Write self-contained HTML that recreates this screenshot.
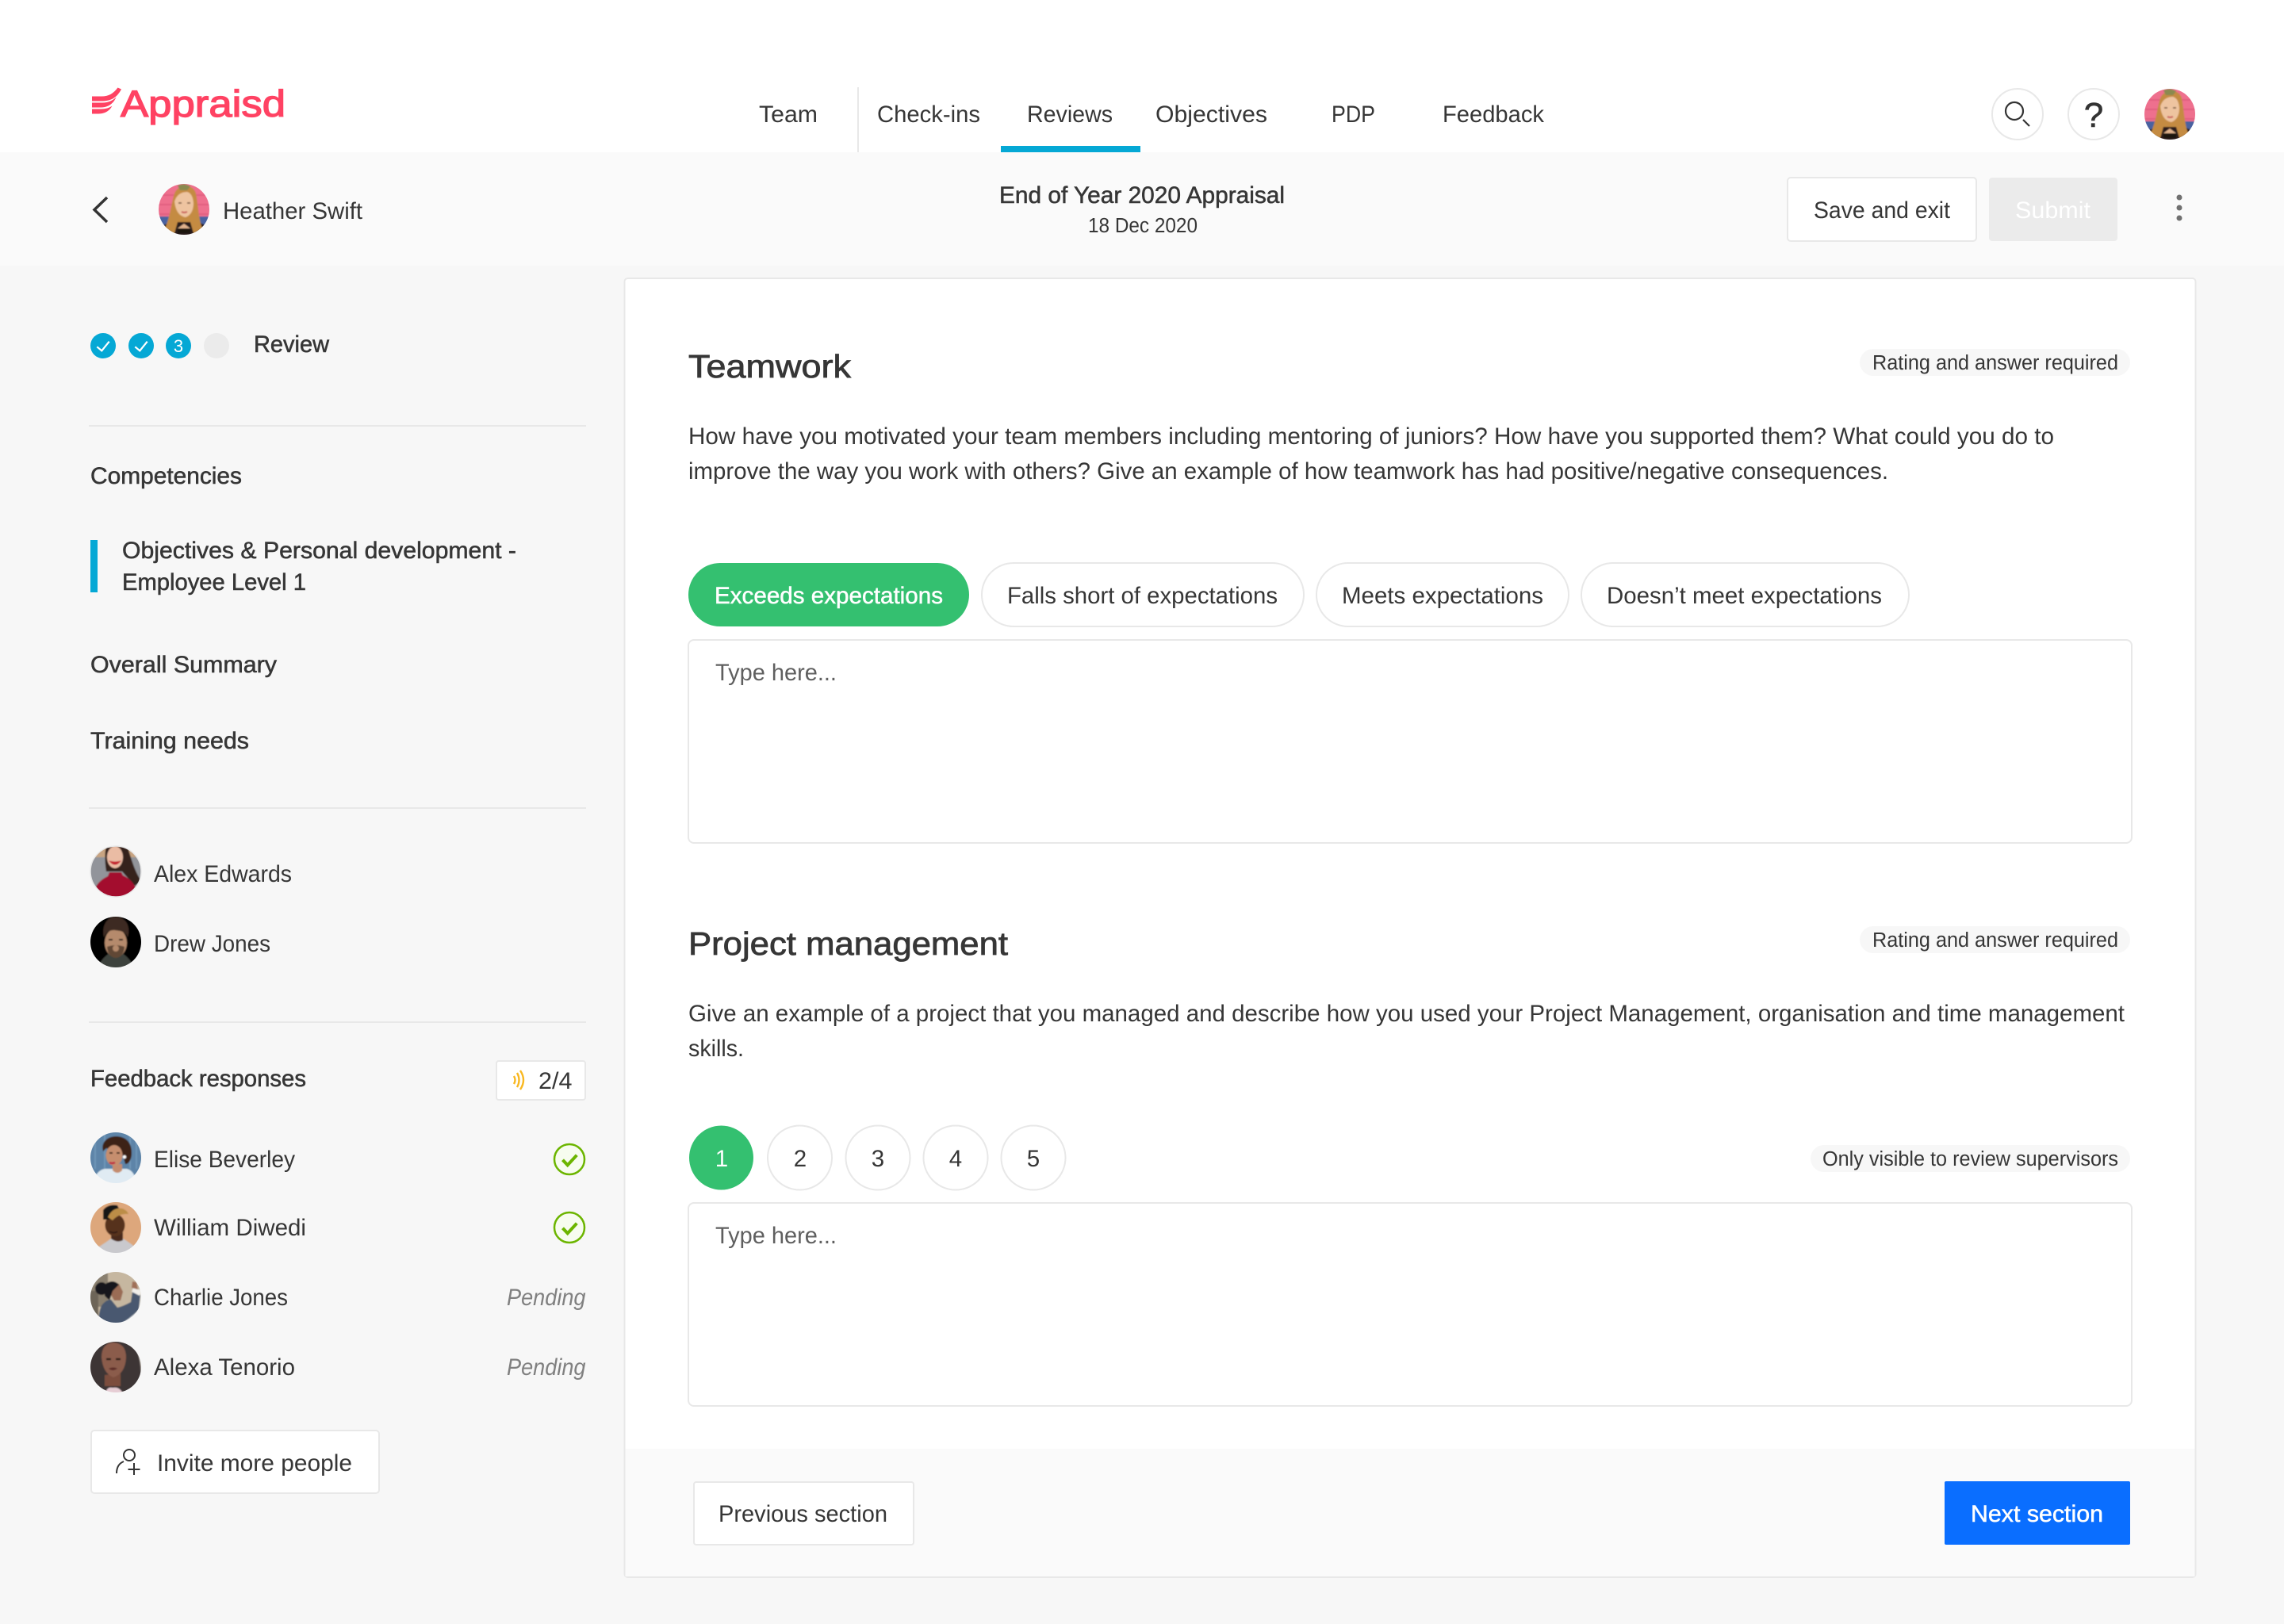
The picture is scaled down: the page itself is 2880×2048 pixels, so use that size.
<!DOCTYPE html>
<html lang="en"><head><meta charset="utf-8"><title>End of Year 2020 Appraisal</title>
<style>
html,body{margin:0;padding:0;width:2880px;height:2048px;overflow:hidden;background:#f7f7f7}
svg{display:block}
text{font-family:"Liberation Sans",Arial,sans-serif;font-size:29.5px;fill:#363636;white-space:pre}
.m{stroke:#363636;stroke-width:.55px}
.w{fill:#fff}.wm{fill:#fff;stroke:#fff;stroke-width:.5px}
.s{font-size:25.5px}
.h{font-size:41px;stroke:#363636;stroke-width:.8px}
.g{fill:#5f5f5f}
.p{fill:#808080;font-style:italic}
.box{fill:#fff;stroke:#e8e8e8;stroke-width:2}
.line{stroke:#e8e8e8;stroke-width:2}
.pill{fill:#f7f7f7}
</style></head><body>
<svg xmlns="http://www.w3.org/2000/svg" width="2880" height="2048" viewBox="0 0 2880 2048">
<defs>
<clipPath id="c"><circle r="32"/></clipPath>
<filter id="b" x="-20%" y="-20%" width="140%" height="140%"><feGaussianBlur stdDeviation=".7"/></filter>
<g id="heather" clip-path="url(#c)"><g filter="url(#b)">
<rect x="-36" y="-36" width="72" height="72" fill="#ee6f8e"/>
<path d="M-36-18H36M-36-6H36M-36 6H36" stroke="#dc5a7c" stroke-width="1.500"/>
<rect x="-36" y="9" width="72" height="27" fill="#4a62a0"/>
<path d="M-36 36V22Q-20 20-14 12H14Q22 20 36 22V36z" fill="#2a1f1a"/>
<path d="M-24 24C-17 8-16-8-12-20-8-32 12-33 15-20 18-6 18 10 23 24L12 30 8 16H-8L-12 30z" fill="#c48b42"/>
<path d="M-8-30Q0-34 8-29L4-24H-5z" fill="#8a8a50"/>
<path d="M-12-10Q-8-22 4-22 11-20 12-8 12 6 2 10-10 8-12-10z" fill="#eec4a0"/>
<path d="M-7-8h4M4-8h4" stroke="#6a4a36" stroke-width="1.600"/><path d="M-3 3q3 2 7 0" stroke="#c85a58" stroke-width="2" fill="none"/>
<path d="M-8 30V24H8V30z" fill="#1a1410"/><path d="M-8 24L0 18 8 24z" fill="#e2b48e"/>
</g></g>
<g id="alex"><g clip-path="url(#c)"><g filter="url(#b)">
<rect x="-36" y="-36" width="72" height="72" fill="#92949a"/><rect x="-36" y="-36" width="72" height="18" fill="#c8a482"/>
<path d="M-12-33H14C20-16 22-4 32 12L24 18 8 0H-12C-14-12-14-24-12-33z" fill="#34211c"/>
<ellipse cx="-1" cy="-18" rx="10" ry="14" fill="#eabca4"/>
<path d="M-6-12q5 5 10 0q-5 1-10 0z" fill="#c41a2c" stroke="#c41a2c" stroke-width="2"/>
<path d="M-30 36Q-28 14-10 6L-8 1H7L9 5Q26 12 30 36z" fill="#a3102e"/>
</g></g><circle r="32" fill="none" stroke="#e8e8e8" stroke-width="1.500"/></g>
<g id="drew" clip-path="url(#c)"><g filter="url(#b)">
<rect x="-36" y="-36" width="72" height="72" fill="#050505"/>
<path d="M-24 36Q-20 22-8 14H8Q20 22 24 36z" fill="#3d423c"/>
<ellipse cx="0" cy="1" rx="14" ry="18" fill="#b58a6c"/>
<path d="M-15-6C-19-28-4-34 4-31 16-28 18-16 15-6 12-14 6-14-2-15-9-15-12-12-15-6z" fill="#3e2c20"/>
<path d="M-11 6Q0 2 11 6 10 19 0 20-10 19-11 6z" fill="#604636"/>
<ellipse cx="0" cy="8" rx="4" ry="4" fill="#b58a6c"/>
<path d="M-9-3h5M4-3h5" stroke="#241710" stroke-width="2"/>
</g></g>
<g id="elise" clip-path="url(#c)"><g filter="url(#b)">
<rect x="-36" y="-36" width="72" height="72" fill="#5d84a8"/>
<path d="M-26-36V14M-14-36V14M18-36V14M26-36V14" stroke="#7096b8" stroke-width="2"/>
<path d="M-30 36Q-26 16-14 14H14Q24 16 28 36z" fill="#e0ebf3"/>
<path d="M-4 8H8V16Q2 22-4 16z" fill="#c48c6e"/>
<path d="M-16-8C-22-30 14-34 19-14 22-2 18 8 12 8L8-6-12-12z" fill="#3d2115"/>
<ellipse cx="-2" cy="-3" rx="10.500" ry="13" fill="#c68e6e"/>
<path d="M-8 6q3 2 7 0" stroke="#c02040" stroke-width="2.500" fill="none"/>
<path d="M-8-6h4M1-6h4" stroke="#2a160e" stroke-width="1.800"/><circle cx="11" cy="-1" r="2.200" fill="#fff"/>
</g></g>
<g id="william" clip-path="url(#c)"><g filter="url(#b)">
<rect x="-36" y="-36" width="72" height="72" fill="#dda77c"/>
<path d="M-24 26Q-14 20-6 14H9Q16 18 26 26V36H-24z" fill="#c9c9cd"/>
<path d="M-6 6H9V16Q2 20-6 14z" fill="#4a2a1b"/>
<ellipse cx="-1" cy="-3" rx="12.500" ry="14" fill="#57321f"/>
<path d="M-16-10V-22Q-10-30 2-28L6-20-8-10z" fill="#191516"/>
<path d="M-10-13Q-4-26 8-24 14-22 16-17 4-18-4-9z" fill="#bc8d46"/>
<path d="M-8 5q6 3 10 0" stroke="#2a140c" stroke-width="1.500" fill="none"/>
</g></g>
<g id="charlie" clip-path="url(#c)"><g filter="url(#b)">
<rect x="-36" y="-36" width="72" height="72" fill="#c6b7a0"/>
<path d="M-36-36H-10V12H-36z" fill="#8a8070"/><path d="M-36-8H-22V24H-36z" fill="#6d6558"/>
<rect x="24" y="-10" width="12" height="30" fill="#e8e4dc"/><rect x="4" y="20" width="30" height="16" fill="#dfe3e6"/>
<path d="M-10-10Q-6-18 4-17L9-7 6 4H-2z" fill="#9a6c54"/>
<circle cx="-18" cy="-11" r="8" fill="#14141a"/><path d="M-14-16Q-4-24 4-16L-4-8-8 4-14-2z" fill="#14141a"/>
<path d="M-22 36Q-22 14-16 8-10 2-6 3L2 13Q10 11 19 6L21-7 31-3 29 16Q14 30 2 36z" fill="#48586f"/>
<path d="M20-7L22-12 31-8 30-2z" fill="#f0eeea"/><path d="M20-12L21-20 26-19 28-10z" fill="#a07058"/>
</g></g>
<g id="alexa" clip-path="url(#c)"><g filter="url(#b)">
<rect x="-36" y="-36" width="72" height="72" fill="#3c3434"/>
<path d="M28-30H36V12H32Q32-14 22-30z" fill="#cfc7bf"/>
<path d="M-14 10V24H6V8z" fill="#7c4e3e"/>
<path d="M-18-12Q-18-30-3-31 13-30 13-12 12 8-3 13-16 8-18-12z" fill="#8b5c4b"/>
<path d="M-12-10h6M0-10h6" stroke="#1f1310" stroke-width="2.200"/>
<path d="M-8 2q5-2 9 0q-5 3-9 0z" fill="#5c2c28" stroke="#5c2c28"/>
<path d="M-14 36Q-12 24-4 26 6 24 10 36z" fill="#e6cdd4"/>
</g></g>
</defs>

<rect width="2880" height="2048" fill="#f7f7f7"/>
<rect width="2880" height="192" fill="#fff"/>
<rect y="192" width="2880" height="143" fill="#fafafa"/>

<!-- logo -->
<g fill="#ff4263">
<path d="M116 121.500H128C137 121.500 143 118 148.500 110.500L153 112.500C147 124 139 127.500 128 127.500H116Z"/>
<path d="M116 129.500H129C136 129.500 142 127 146.500 122.500C143 131 136 135.500 127 135.500H116Z"/>
<path d="M116 137.500H127C133 137.500 138 136 141.500 133.500C138 140 132 143.500 124 143.500H116Z"/>
</g>
<text x="152" y="147" textLength="208" lengthAdjust="spacingAndGlyphs" style="font-size:47px;fill:#ff4263;stroke:#ff4263;stroke-width:1.300px">Appraisd</text>

<!-- nav -->
<text x="957" y="154" textLength="74" lengthAdjust="spacingAndGlyphs">Team</text>
<line x1="1082" y1="110" x2="1082" y2="192" class="line"/>
<text x="1106" y="154" textLength="130" lengthAdjust="spacingAndGlyphs">Check-ins</text>
<text x="1295" y="154" textLength="108" lengthAdjust="spacingAndGlyphs">Reviews</text>
<text x="1457" y="154" textLength="141" lengthAdjust="spacingAndGlyphs">Objectives</text>
<text x="1679" y="154" textLength="55" lengthAdjust="spacingAndGlyphs">PDP</text>
<text x="1819" y="154" textLength="128" lengthAdjust="spacingAndGlyphs">Feedback</text>
<rect x="1262" y="184" width="176" height="8" fill="#05a8d5"/>

<circle cx="2544" cy="144" r="32" fill="#fff" stroke="#e8e8e8" stroke-width="2"/>
<circle cx="2540" cy="140" r="11" fill="none" stroke="#333" stroke-width="2.200"/>
<line x1="2551" y1="151" x2="2559" y2="159" stroke="#333" stroke-width="2.200"/>
<circle cx="2640" cy="144" r="32" fill="#fff" stroke="#e8e8e8" stroke-width="2"/>
<text x="2640" y="160" text-anchor="middle" style="font-size:44px;fill:#333;stroke:#333;stroke-width:.6px">?</text>
<use href="#heather" x="2736" y="144"/>

<!-- sub header -->
<path d="M135 249L119 264.500L135 280" fill="none" stroke="#333" stroke-width="3.500"/>
<use href="#heather" x="232" y="264"/>
<text x="281" y="276" textLength="176" lengthAdjust="spacingAndGlyphs">Heather Swift</text>
<text x="1260" y="256" textLength="360" lengthAdjust="spacingAndGlyphs" class="m">End of Year 2020 Appraisal</text>
<text x="1372" y="293" textLength="138" lengthAdjust="spacingAndGlyphs" class="s">18 Dec 2020</text>
<rect x="2254" y="224" width="238" height="80" rx="4" class="box"/>
<text x="2287" y="275" textLength="172" lengthAdjust="spacingAndGlyphs">Save and exit</text>
<rect x="2508" y="224" width="162" height="80" rx="4" fill="#ebebeb"/>
<text x="2541" y="275" textLength="95" lengthAdjust="spacingAndGlyphs" class="w">Submit</text>
<g fill="#707070"><circle cx="2748" cy="249" r="3.500"/><circle cx="2748" cy="262" r="3.500"/><circle cx="2748" cy="275" r="3.500"/></g>

<!-- sidebar -->
<g fill="#05a8d5"><circle cx="130" cy="436" r="16"/><circle cx="178" cy="436" r="16"/><circle cx="225" cy="436" r="16"/></g>
<circle cx="273" cy="436" r="16" fill="#ebebeb"/>
<path d="M122.300 437.300L128.300 442.300L137.700 430.700M170.300 437.300L176.300 442.300L185.700 430.700" fill="none" stroke="#fff" stroke-width="2.200"/>
<text x="225" y="444" text-anchor="middle" class="w" style="font-size:22px">3</text>
<text x="320" y="444" textLength="95" lengthAdjust="spacingAndGlyphs" class="m">Review</text>
<line x1="112" y1="537" x2="739" y2="537" class="line"/>
<text x="114" y="610" textLength="191" lengthAdjust="spacingAndGlyphs" class="m">Competencies</text>
<rect x="114" y="681" width="9" height="66" fill="#05a8d5"/>
<text x="154" y="704" textLength="497" lengthAdjust="spacingAndGlyphs" class="m">Objectives &amp; Personal development -</text>
<text x="154" y="744" textLength="232" lengthAdjust="spacingAndGlyphs" class="m">Employee Level 1</text>
<text x="114" y="848" textLength="235" lengthAdjust="spacingAndGlyphs" class="m">Overall Summary</text>
<text x="114" y="944" textLength="200" lengthAdjust="spacingAndGlyphs" class="m">Training needs</text>
<line x1="112" y1="1019" x2="739" y2="1019" class="line"/>

<use href="#alex" x="146" y="1099"/>
<text x="194" y="1112" textLength="174" lengthAdjust="spacingAndGlyphs">Alex Edwards</text>
<use href="#drew" x="146" y="1188"/>
<text x="194" y="1200" textLength="147" lengthAdjust="spacingAndGlyphs">Drew Jones</text>
<line x1="112" y1="1289" x2="739" y2="1289" class="line"/>

<text x="114" y="1370" textLength="272" lengthAdjust="spacingAndGlyphs" class="m">Feedback responses</text>
<rect x="626" y="1338" width="112" height="49" rx="3" class="box"/>
<path d="M648 1357q3 5 0 10M652 1353q5 9 0 18M656 1350q8 12 0 24" fill="none" stroke="#f9b820" stroke-width="2.400"/>
<text x="679" y="1373" textLength="42.500" lengthAdjust="spacingAndGlyphs">2/4</text>

<use href="#elise" x="146" y="1460"/>
<text x="194" y="1472" textLength="178" lengthAdjust="spacingAndGlyphs">Elise Beverley</text>
<circle cx="718" cy="1462" r="19" fill="#f7fcef" stroke="#6cb500" stroke-width="2.500"/>
<path d="M709.500 1462.700L715.700 1469.300L727.300 1456.700" fill="none" stroke="#6cb500" stroke-width="4"/>

<use href="#william" x="146" y="1548"/>
<text x="194" y="1558" textLength="192" lengthAdjust="spacingAndGlyphs">William Diwedi</text>
<circle cx="718" cy="1548" r="19" fill="#f7fcef" stroke="#6cb500" stroke-width="2.500"/>
<path d="M709.500 1548.700L715.700 1555.300L727.300 1542.700" fill="none" stroke="#6cb500" stroke-width="4"/>

<use href="#charlie" x="146" y="1636"/>
<text x="194" y="1646" textLength="169" lengthAdjust="spacingAndGlyphs">Charlie Jones</text>
<text x="639" y="1646" textLength="99.500" lengthAdjust="spacingAndGlyphs" class="p">Pending</text>

<use href="#alexa" x="146" y="1724"/>
<text x="194" y="1734" textLength="178" lengthAdjust="spacingAndGlyphs">Alexa Tenorio</text>
<text x="639" y="1734" textLength="99.500" lengthAdjust="spacingAndGlyphs" class="p">Pending</text>

<rect x="115" y="1804" width="363" height="79" rx="4" class="box"/>
<circle cx="163" cy="1835" r="7" fill="none" stroke="#333" stroke-width="2"/>
<path d="M147 1858C147 1849 151 1845 156 1843M169 1845V1860M161.500 1853H176.500" fill="none" stroke="#333" stroke-width="2"/>
<text x="198" y="1855" textLength="246" lengthAdjust="spacingAndGlyphs">Invite more people</text>

<!-- card -->
<rect x="787.500" y="351" width="1981" height="1638" rx="4" fill="#fff" stroke="#e8e8e8" stroke-width="2"/>
<rect x="788.500" y="1827" width="1979" height="161" fill="#fafafa"/>

<text x="868" y="476" textLength="205" lengthAdjust="spacingAndGlyphs" class="h">Teamwork</text>
<rect x="2345" y="440" width="341" height="34" rx="17" class="pill"/>
<text x="2361" y="466" textLength="310" lengthAdjust="spacingAndGlyphs" class="s">Rating and answer required</text>
<text x="868" y="560" textLength="1722" lengthAdjust="spacingAndGlyphs">How have you motivated your team members including mentoring of juniors? How have you supported them? What could you do to</text>
<text x="868" y="604" textLength="1513" lengthAdjust="spacingAndGlyphs">improve the way you work with others? Give an example of how teamwork has had positive/negative consequences.</text>

<rect x="868" y="710" width="354" height="80" rx="40" fill="#34c070"/>
<text x="901" y="761" textLength="288" lengthAdjust="spacingAndGlyphs" class="wm">Exceeds expectations</text>
<rect x="1238" y="710" width="406" height="80" rx="40" class="box"/>
<text x="1270" y="761" textLength="341" lengthAdjust="spacingAndGlyphs">Falls short of expectations</text>
<rect x="1660" y="710" width="318" height="80" rx="40" class="box"/>
<text x="1692" y="761" textLength="254" lengthAdjust="spacingAndGlyphs">Meets expectations</text>
<rect x="1994" y="710" width="413" height="80" rx="40" class="box"/>
<text x="2026" y="761" textLength="347" lengthAdjust="spacingAndGlyphs">Doesn’t meet expectations</text>

<rect x="868" y="807" width="1820" height="256" rx="7" class="box"/>
<text x="902" y="858" textLength="153" lengthAdjust="spacingAndGlyphs" class="g">Type here...</text>

<text x="868" y="1204" textLength="403" lengthAdjust="spacingAndGlyphs" class="h">Project management</text>
<rect x="2345" y="1168" width="341" height="34" rx="17" class="pill"/>
<text x="2361" y="1194" textLength="310" lengthAdjust="spacingAndGlyphs" class="s">Rating and answer required</text>
<text x="868" y="1288" textLength="1811" lengthAdjust="spacingAndGlyphs">Give an example of a project that you managed and describe how you used your Project Management, organisation and time management</text>
<text x="868" y="1332" textLength="70" lengthAdjust="spacingAndGlyphs">skills.</text>

<circle cx="909.500" cy="1460" r="40.500" fill="#34c070"/>
<text x="910" y="1471" text-anchor="middle" class="w">1</text>
<circle cx="1008.500" cy="1460" r="40.500" class="box"/>
<text x="1009" y="1471" text-anchor="middle">2</text>
<circle cx="1107" cy="1460" r="40.500" class="box"/>
<text x="1107" y="1471" text-anchor="middle">3</text>
<circle cx="1205" cy="1460" r="40.500" class="box"/>
<text x="1205" y="1471" text-anchor="middle">4</text>
<circle cx="1303" cy="1460" r="40.500" class="box"/>
<text x="1303" y="1471" text-anchor="middle">5</text>
<rect x="2283" y="1444" width="403" height="34" rx="17" class="pill"/>
<text x="2298" y="1470" textLength="373" lengthAdjust="spacingAndGlyphs" class="s">Only visible to review supervisors</text>

<rect x="868" y="1517" width="1820" height="256" rx="7" class="box"/>
<text x="902" y="1568" textLength="153" lengthAdjust="spacingAndGlyphs" class="g">Type here...</text>

<rect x="875" y="1869" width="277" height="79" rx="3" class="box"/>
<text x="906" y="1919" textLength="213" lengthAdjust="spacingAndGlyphs">Previous section</text>
<rect x="2452" y="1868" width="234" height="80" rx="2" fill="#0a6eff"/>
<text x="2485" y="1919" textLength="167" lengthAdjust="spacingAndGlyphs" class="wm">Next section</text>
</svg>
</body></html>
